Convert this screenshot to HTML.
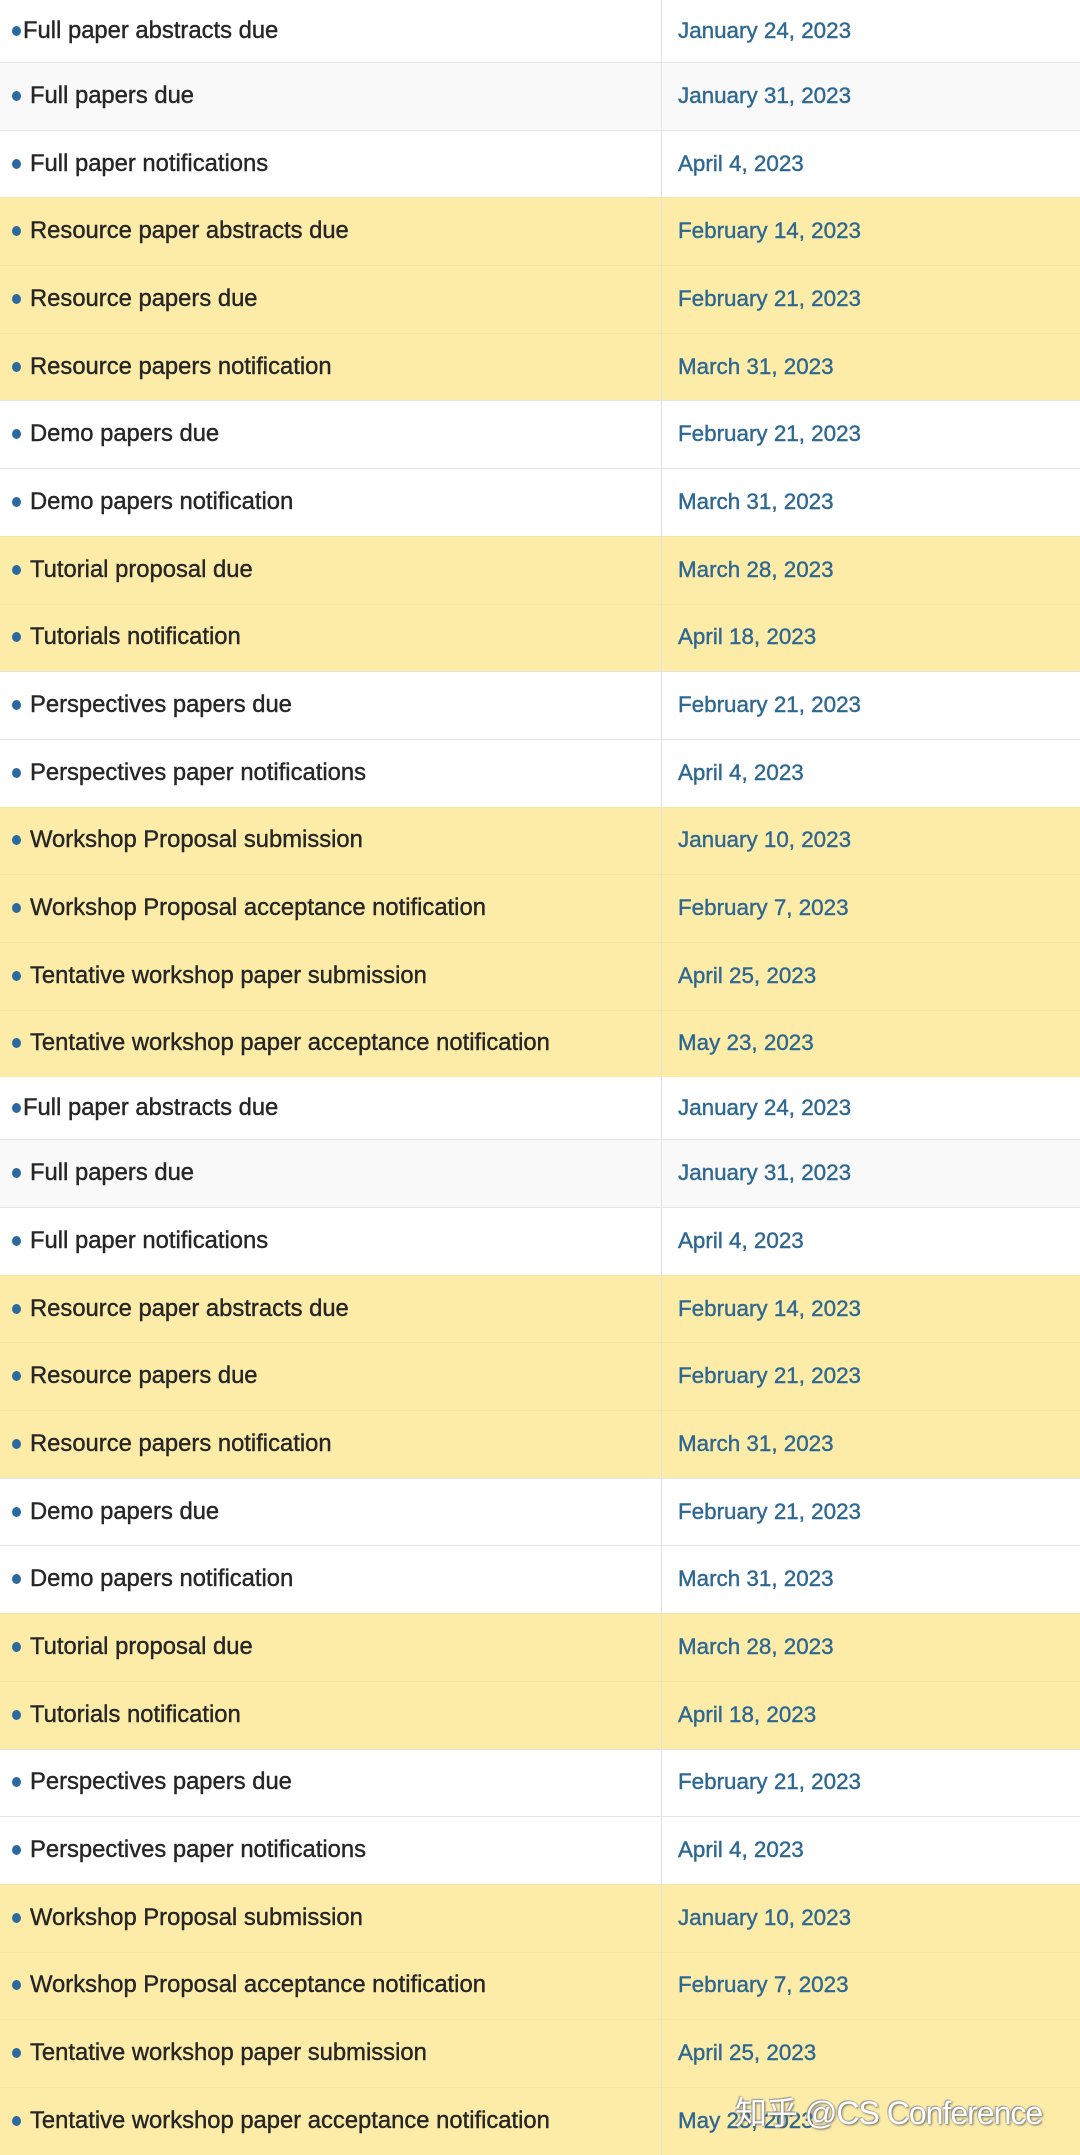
<!DOCTYPE html>
<html><head><meta charset="utf-8"><style>
*{margin:0;padding:0;box-sizing:border-box}
body{width:1080px;height:2154px;overflow:hidden;background:#fff;font-family:"Liberation Sans",sans-serif;font-size:22.4px;position:relative}
.r{display:flex;height:67.7px;border-top:1px solid #e4e4e4;align-items:center}
.r.f{border-top:none;height:62px}
.w{background:#fff}.g{background:#f9f9f9}.y{background:#fdeca8;border-top-color:#f5e4a2}
.a{width:662px;height:100%;display:flex;align-items:center;padding-left:12px;padding-bottom:1px;font-size:23.8px;color:#262626;-webkit-text-stroke:0.4px #262626;border-right:1.5px solid #e2e2e2}
.a i{display:inline-block;flex:none;width:9px;height:10px;border-radius:50%;background:#2a6aa0;margin-right:9px;-webkit-text-stroke:0}
.a.n i{margin-right:2px}
.b{padding-left:16px;padding-bottom:1px;color:#2e6892;-webkit-text-stroke:0.4px #2e6892}
.wm{position:absolute;left:735px;top:2088px;font-size:32px;color:#fff;font-family:"Liberation Sans","Noto Sans CJK SC",sans-serif;text-shadow:1px 1px 2px #666,-1px -1px 1px #999;letter-spacing:-1px}
</style></head><body>
<div id="t"></div>
<div class="wm">知乎 @CS Conference</div>
<script>
var d=[["w","Full paper abstracts due","January 24, 2023",1],["g","Full papers due","January 31, 2023"],["w","Full paper notifications","April 4, 2023"],["y","Resource paper abstracts due","February 14, 2023"],["y","Resource papers due","February 21, 2023"],["y","Resource papers notification","March 31, 2023"],["w","Demo papers due","February 21, 2023"],["w","Demo papers notification","March 31, 2023"],["y","Tutorial proposal due","March 28, 2023"],["y","Tutorials notification","April 18, 2023"],["w","Perspectives papers due","February 21, 2023"],["w","Perspectives paper notifications","April 4, 2023"],["y","Workshop Proposal submission","January 10, 2023"],["y","Workshop Proposal acceptance notification","February 7, 2023"],["y","Tentative workshop paper submission","April 25, 2023"],["y","Tentative workshop paper acceptance notification","May 23, 2023"]];
var h="";for(var k=0;k<2;k++)d.forEach(function(x,i){h+='<div class="r '+x[0]+(i==0?' f':'')+'"><div class="a'+(x[3]?' n':'')+'"><i></i>'+x[1]+'</div><div class="b">'+x[2]+'</div></div>';});
document.getElementById("t").innerHTML=h;
</script>
</body></html>
